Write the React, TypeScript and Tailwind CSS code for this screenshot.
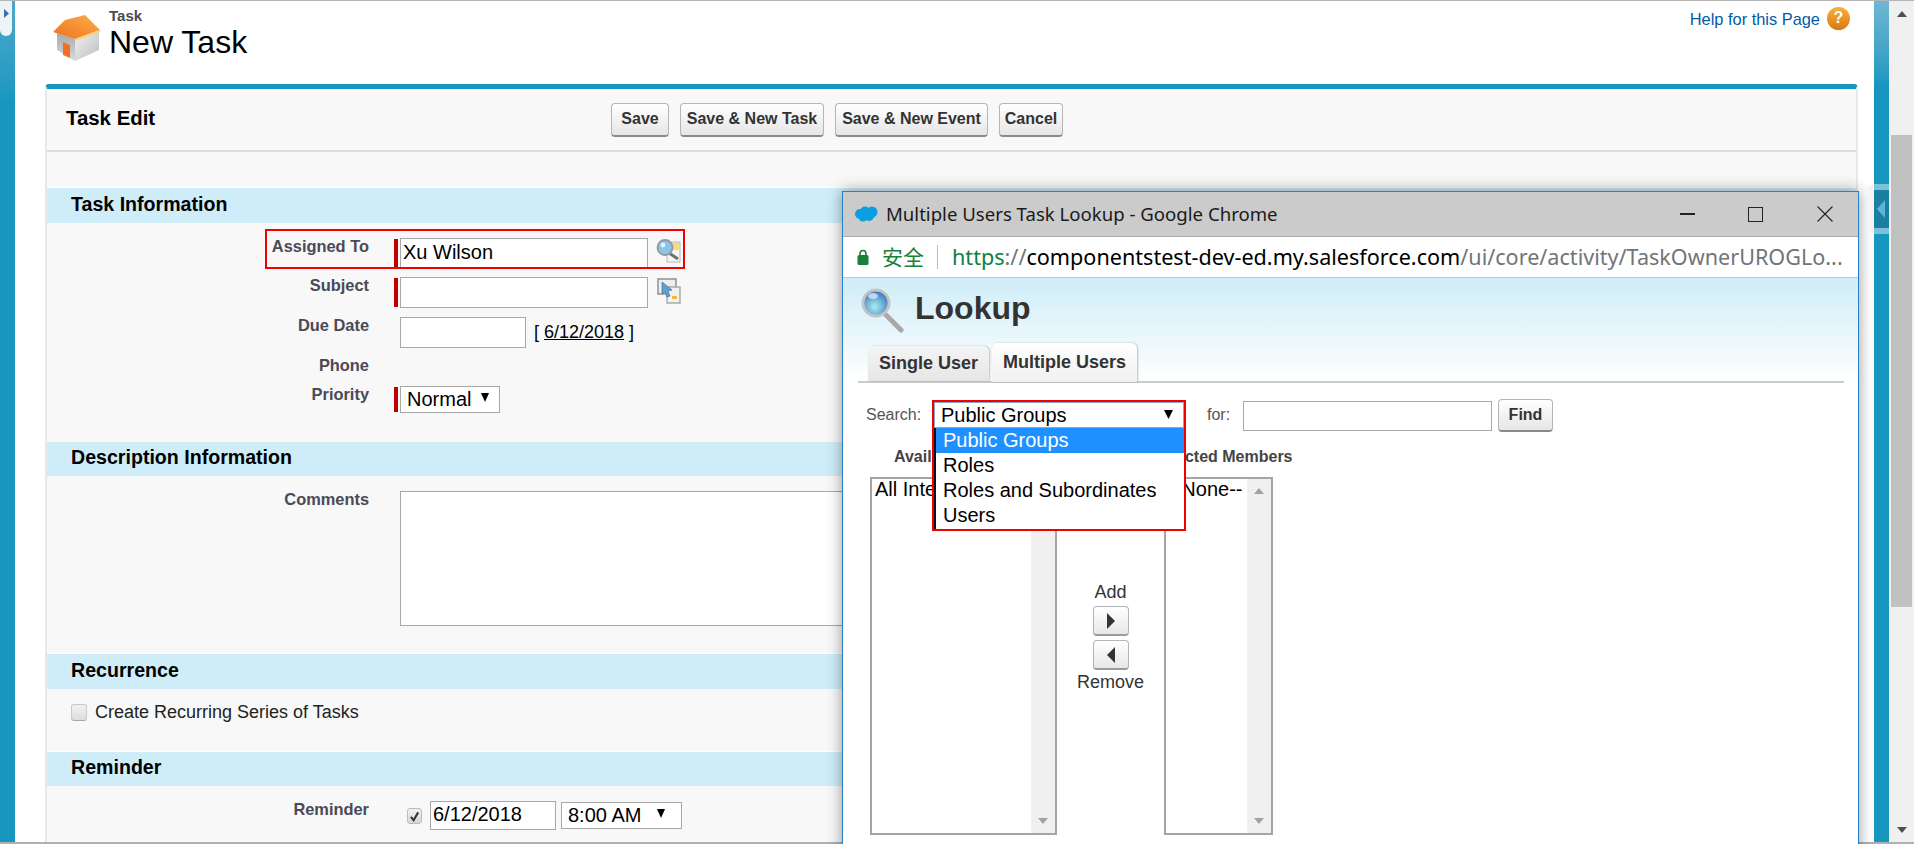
import React from 'react';
import clsx from 'clsx';

const Arrow = ({ dir, className }: { dir: 'up' | 'down' | 'left' | 'right'; className?: string }) => {
  const points = {
    up: '5,0 10,7 0,7',
    down: '0,0 10,0 5,7',
    left: '7,0 7,10 0,5',
    right: '0,0 7,5 0,10',
  }[dir];
  const box = dir === 'up' || dir === 'down' ? '0 0 10 7' : '0 0 7 10';
  return (
    <svg viewBox={box} preserveAspectRatio="none" className={className} fill="currentColor">
      <polygon points={points} />
    </svg>
  );
};

const HouseIcon = () => (
  <svg viewBox="0 0 47 47" className="w-[47px] h-[47px] shrink-0">
    <defs>
      <linearGradient id="wallR" x1="0" y1="0" x2="1" y2="1">
        <stop offset="0" stopColor="#f2f2f2" />
        <stop offset="1" stopColor="#bdbdbd" />
      </linearGradient>
      <linearGradient id="wallL" x1="0" y1="0" x2="0" y2="1">
        <stop offset="0" stopColor="#a8a8a8" />
        <stop offset="1" stopColor="#dadada" />
      </linearGradient>
      <linearGradient id="roof" x1="0" y1="1" x2="1" y2="0">
        <stop offset="0" stopColor="#f0701f" />
        <stop offset="1" stopColor="#fbb04a" />
      </linearGradient>
    </defs>
    <polygon points="4,19 22,25 22,47 4,36" fill="url(#wallL)" />
    <polygon points="22,25 46,17 46,36 22,47" fill="url(#wallR)" />
    <polygon points="10,28 17,31 17,44 10,41" fill="#f0702a" />
    <polygon points="0,18 12,6 32,1 47,16 22,25" fill="url(#roof)" />
    <polygon points="47,16 22,25 22,27 47,18" fill="#f9d27d" />
  </svg>
);

const LookupIcon = () => (
  <svg viewBox="0 0 25 24" className="w-[25px] h-[24px] ml-[8px] mt-[1px] shrink-0">
    <rect x="11" y="3" width="13" height="20" fill="#f6f6f0" stroke="#b5b5b5" />
    <rect x="12" y="4" width="11" height="7" fill="#fbd878" />
    <line x1="13" y1="14" x2="22" y2="20" stroke="#6f6f6f" strokeWidth="3" />
    <circle cx="9" cy="8.5" r="7.5" fill="#8cc4e8" stroke="#8f9aa3" strokeWidth="1.8" />
    <circle cx="7" cy="6" r="2.4" fill="#dff1fb" />
  </svg>
);

const MultiIcon = () => (
  <svg viewBox="0 0 24 26" className="w-[24px] h-[26px] ml-[9px] mt-[1px] shrink-0">
    <rect x="1" y="1" width="18" height="15" fill="#eeeeee" stroke="#8a8a8a" strokeWidth="1.4" />
    <rect x="10" y="9" width="13" height="16" fill="#f1f1ee" stroke="#a5a5a5" strokeWidth="1.4" />
    <rect x="15" y="18" width="5" height="3" fill="#f4b63f" />
    <polygon points="5,4 15,12 11,13 13,18 10,19 8,14 5,16" fill="#5da2d6" stroke="#35658c" strokeWidth="0.6" />
  </svg>
);

const BigLens = () => (
  <svg viewBox="0 0 44 46" className="w-[44px] h-[46px] shrink-0">
    <defs>
      <radialGradient id="lens" cx="0.45" cy="0.65" r="0.7">
        <stop offset="0" stopColor="#a8eef0" />
        <stop offset="1" stopColor="#2f68b8" />
      </radialGradient>
    </defs>
    <line x1="25" y1="28" x2="40" y2="43" stroke="#a9a9a9" strokeWidth="5" strokeLinecap="round" />
    <circle cx="15" cy="16" r="13" fill="url(#lens)" stroke="#c4c4c4" strokeWidth="3" />
    <ellipse cx="12" cy="9" rx="5" ry="3" fill="#d6e6f6" opacity="0.8" />
  </svg>
);

const Field = ({ className, value }: { className?: string; value?: string }) => (
  <input
    readOnly
    defaultValue={value}
    className={clsx('block border border-[#a8a8a8] bg-white px-[2px] pb-[2px] text-[20px] leading-none outline-none', className)}
  />
);

const Row = ({
  label,
  required,
  className,
  children,
}: {
  label: string;
  required?: boolean;
  className?: string;
  children?: React.ReactNode;
}) => (
  <div className={clsx('flex', className)}>
    <div className="w-[322px] text-right text-[16.4px] leading-[17px] font-bold text-[#4a4a56]">{label}</div>
    <div className="w-[31px] pl-[25px] py-[1px]">{required && <div className="w-[4px] h-full bg-[#c00000]" />}</div>
    <div className="flex items-start">{children}</div>
  </div>
);

const SectionHead = ({ title, className }: { title: string; className?: string }) => (
  <div className={clsx('bg-[#cfedf8] pl-[24px] pb-[2px] flex items-center text-[19.6px] font-bold text-black', className)}>{title}</div>
);

const PageButton = ({ label, className }: { label: string; className?: string }) => (
  <button
    className={clsx(
      'h-[34px] rounded-[4px] border border-[#b5b5b5] border-b-2 border-b-[#8a8a8a] bg-linear-to-b from-white to-[#e6e6e6] text-[16px] font-bold text-[#333]',
      className
    )}
  >
    {label}
  </button>
);

const ClosedSelect = ({ value, className }: { value: string; className?: string }) => (
  <div className={clsx('flex items-center border border-[#a8a8a8] bg-white text-[20px] pl-[6px] pb-[2px]', className)}>
    <span className="flex-1">{value}</span>
    <Arrow dir="down" className="w-[8px] h-[9px] mb-[3px] text-black" />
  </div>
);

const ListBox = ({ text, className, textClass }: { text: string; className?: string; textClass?: string }) => (
  <div className={clsx('h-[358px] border-2 border-[#a5a5a5] flex bg-white shrink-0', className)}>
    <div className={clsx('flex-1 text-[20px] leading-[20px] whitespace-nowrap overflow-hidden', textClass)}>{text}</div>
    <div className="w-[24px] bg-[#f0f0f0] flex flex-col justify-between items-center py-[9px] text-[#a3a3a3]">
      <Arrow dir="up" className="w-[10px] h-[6px]" />
      <Arrow dir="down" className="w-[10px] h-[6px]" />
    </div>
  </div>
);

const MoveButton = ({ dir }: { dir: 'left' | 'right' }) => (
  <button className="w-[36px] h-[30px] mt-[4px] rounded-[4px] border border-[#b5b5b5] border-b-2 border-b-[#9a9a9a] bg-linear-to-b from-white to-[#e8e8e8] flex items-center justify-center text-[#333]">
    <Arrow dir={dir} className="w-[8px] h-[16px]" />
  </button>
);

function LookupWindow() {
  return (
    <div className="absolute left-[842px] top-[191px] w-[1017px] h-[700px] z-10 border border-[#2a7fc9] bg-white shadow-[0_0_14px_rgba(0,0,0,0.4)] font-['Liberation_Sans',sans-serif]">
      <div className="h-[45px] bg-[#cbcbcb] border-b border-[#a9a9a9] flex items-center pl-[11px] pr-[25px]">
        <svg viewBox="0 0 24 16" className="w-[24px] h-[16px] shrink-0" fill="#0a9fe0">
          <circle cx="6" cy="8" r="5" />
          <circle cx="11" cy="5.5" r="5" />
          <circle cx="18" cy="6" r="5.5" />
          <circle cx="15" cy="10" r="5" />
          <circle cx="9" cy="11" r="4.5" />
        </svg>
        <span className="ml-[8px] text-[18.6px] text-[#1a1a1a] font-['Noto_Sans',sans-serif] whitespace-nowrap">Multiple Users Task Lookup - Google Chrome</span>
        <div className="ml-auto flex items-center text-[#222]">
          <div className="w-[15px] h-[1.5px] bg-[#222]" />
          <div className="w-[15px] h-[15px] border border-[#222] ml-[53px]" />
          <svg viewBox="0 0 16 16" className="w-[16px] h-[16px] ml-[54px]" stroke="#222" strokeWidth="1.1">
            <line x1="0.5" y1="0.5" x2="15.5" y2="15.5" />
            <line x1="15.5" y1="0.5" x2="0.5" y2="15.5" />
          </svg>
        </div>
      </div>
      <div className="h-[41px] border-b border-[#b8cbd5] flex items-center pl-[14px] whitespace-nowrap overflow-hidden">
        <svg viewBox="0 0 12 16" className="w-[12px] h-[16px] shrink-0">
          <path d="M3 7V4.5a3 3 0 0 1 6 0V7" fill="none" stroke="#188038" strokeWidth="1.6" />
          <rect x="0.5" y="6" width="11" height="10" rx="1.5" fill="#188038" />
        </svg>
        <span className="ml-[13px] text-[21px] text-[#188038] font-['Noto_Sans_CJK_SC',sans-serif]">安全</span>
        <div className="ml-[13px] w-px h-[24px] bg-[#bbb]" />
        <span className="ml-[14px] text-[21.6px] font-['Noto_Sans',sans-serif] text-[#70757a]">
          <span className="text-[#0b8043]">https</span>
          ://
          <span className="text-black">componentstest-dev-ed.my.salesforce.com</span>
          /ui/core/activity/TaskOwnerUROGLo...
        </span>
      </div>

      <div className="h-[105px] bg-linear-to-b from-[#cfedf8] to-white flex flex-col justify-between">
        <div className="flex items-start pl-[18px] pt-[9px]">
          <BigLens />
          <span className="ml-[10px] text-[32px] leading-[42px] font-bold text-[#333]">Lookup</span>
        </div>
        <div className="ml-[15px] mr-[14px] border-b-2 border-[#cccccc] pl-[10px] flex items-end gap-[3px] h-[39px]">
          <div className="w-[121px] h-[35px] rounded-t-[6px] bg-linear-to-b from-[#f4f4f4] to-[#e6e6e6] shadow-[1px_0_2px_rgba(0,0,0,0.25)] flex items-center justify-center text-[18px] font-bold text-[#333]">Single User</div>
          <div className="w-[145px] h-[39px] -mb-[1px] rounded-t-[6px] bg-linear-to-b from-white to-[#f0f0f0] shadow-[1px_0_2px_rgba(0,0,0,0.25)] flex items-center justify-center text-[18px] font-bold text-[#333]">Multiple Users</div>
        </div>
      </div>

      <div className="mt-[18px] flex items-start h-[30px] pl-[23px]">
        <span className="w-[66px] leading-[28px] text-[16px] text-[#555]">Search:</span>
        <div className="relative w-[254px] h-[30px]">
          <div className="absolute left-0 -top-[1px] w-[254px] h-[131px] border-2 border-[#f00000] bg-white z-10 text-[20px]">
            <div className="h-[26px] border border-[#8fa3cc] flex items-center pl-[6px] pr-[10px] pb-[1px]">
              <span className="flex-1">Public Groups</span>
              <Arrow dir="down" className="w-[9px] h-[9px] text-black" />
            </div>
            <div className="border-l-[2px] border-[#111] leading-[25px] pl-[7px] h-[101px]">
              <div className="-ml-[7px] pl-[7px] bg-[#1e90ff] text-white">Public Groups</div>
              <div>Roles</div>
              <div>Roles and Subordinates</div>
              <div>Users</div>
            </div>
          </div>
        </div>
        <span className="ml-[21px] w-[36px] leading-[28px] text-[16px] text-[#555]">for:</span>
        <Field className="w-[249px] h-[30px]" />
        <button className="ml-[6px] w-[55px] h-[33px] -mt-[2px] rounded-[4px] border border-[#b5b5b5] border-b-2 border-b-[#8a8a8a] bg-linear-to-b from-white to-[#e6e6e6] text-[16px] font-bold text-[#333]">Find</button>
      </div>

      <div className="mt-[16px] h-[20px] pl-[51px] flex text-[16px] leading-[20px] font-bold text-[#444] whitespace-nowrap">
        <span className="w-[145px]">Available Members</span>
        <span className="ml-[113px]">Selected Members</span>
      </div>

      <div className="mt-[10px] pl-[27px] flex items-start">
        <ListBox text="All Internal Users" className="w-[187px]" textClass="pl-[3px]" />
        <div className="w-[107px] flex flex-col items-center pt-[105px] text-[18px] leading-[20px] text-[#333]">
          <span>Add</span>
          <MoveButton dir="right" />
          <MoveButton dir="left" />
          <span className="mt-[2px]">Remove</span>
        </div>
        <ListBox text="--None--" className="w-[109px]" textClass="pl-[2px]" />
      </div>
    </div>
  );
}

export default function App() {
  return (
    <div className="relative w-[1914px] h-[844px] overflow-hidden bg-white text-black font-['Liberation_Sans',sans-serif]">
      <div className="flex h-[844px] border-t border-b-2 border-t-[#b5b5b5] border-b-[#b0b0b0]">
        <div className="w-[15px] shrink-0 bg-linear-to-b from-[#4ba9ca] to-[#1797c0] to-[12%] relative">
          <div className="w-[12px] h-[35px] rounded-b-[6px] bg-[#eef3f6] pt-[8px] pl-[4px] text-[#3a6fb5]">
            <Arrow dir="right" className="w-[5px] h-[9px]" />
          </div>
        </div>

        <div className="flex-1 min-w-0 flex flex-col">
          <div className="h-[83px] shrink-0 flex items-start pl-[38px] pr-[24px]">
            <div className="mt-[13px]">
              <HouseIcon />
            </div>
            <div className="ml-[9px] pt-[6px]">
              <div className="text-[15px] leading-[17px] font-bold text-[#4a4a56]">Task</div>
              <div className="text-[32px] leading-[36px]">New Task</div>
            </div>
            <div className="ml-auto mt-[6px] flex items-center text-[16.4px] text-[#015ba7]">
              <span>Help for this Page</span>
              <div className="ml-[7px] -mt-[2px] w-[23px] h-[23px] rounded-full bg-linear-to-b from-[#f7b13a] to-[#d9780f] flex items-center justify-center text-white font-bold text-[16px]">?</div>
            </div>
          </div>

          <div className="ml-[30px] mr-[16px] flex-1 min-h-0 rounded-t-[4px] border-t-[5px] border-t-[#1797c0] border-x-2 border-x-[#e8e8e8] bg-[#f8f8f8] flex flex-col">
            <div className="h-[63px] shrink-0 border-b-2 border-[#dcdcdc] flex items-center">
              <div className="w-[564px] pl-[19px] pb-[2px] text-[20.4px] font-bold">Task Edit</div>
              <div className="flex gap-[11px]">
                <PageButton label="Save" className="w-[58px]" />
                <PageButton label="Save & New Task" className="w-[144px]" />
                <PageButton label="Save & New Event" className="w-[153px]" />
                <PageButton label="Cancel" className="w-[64px]" />
              </div>
            </div>
            <div className="h-[35px] shrink-0" />

            <SectionHead title="Task Information" className="h-[36px] border-t border-white shrink-0" />
            <div className="h-[219px] shrink-0">
              <Row label="Assigned To" required className="relative mt-[15px] h-[30px]">
                <Field value="Xu Wilson" className="w-[248px] h-[30px]" />
                <LookupIcon />
                <div className="absolute left-[218px] -top-[9px] w-[420px] h-[40px] border-2 border-[#f00000]" />
              </Row>
              <Row label="Subject" required className="mt-[9px] h-[31px]">
                <Field className="w-[248px] h-[31px]" />
                <MultiIcon />
              </Row>
              <Row label="Due Date" className="mt-[9px] h-[31px]">
                <Field className="w-[126px] h-[31px]" />
                <span className="ml-[8px] mt-[5px] text-[18px] leading-[20px] whitespace-nowrap">
                  [ <span className="underline">6/12/2018</span> ]
                </span>
              </Row>
              <Row label="Phone" className="mt-[9px] h-[20px]" />
              <Row label="Priority" required className="mt-[9px] h-[27px]">
                <ClosedSelect value="Normal" className="w-[100px] h-[27px] pr-[10px]" />
              </Row>
            </div>

            <SectionHead title="Description Information" className="h-[34px] shrink-0" />
            <div className="h-[177px] shrink-0 pt-[15px]">
              <Row label="Comments">
                <textarea readOnly className="block w-[800px] h-[135px] border border-[#a8a8a8] bg-white outline-none resize-none" />
              </Row>
            </div>

            <SectionHead title="Recurrence" className="h-[36px] border-t border-white shrink-0" />
            <div className="h-[62px] shrink-0 pt-[15px] pl-[24px] flex items-start">
              <div className="w-[16px] h-[17px] rounded-[3px] border border-[#c8c8c8] border-b-[#aaa] bg-linear-to-b from-[#f2f2f2] to-[#dddddd]" />
              <span className="ml-[8px] text-[18px] leading-[17px] text-[#222]">Create Recurring Series of Tasks</span>
            </div>

            <SectionHead title="Reminder" className="h-[35px] border-t border-white shrink-0" />
            <div className="flex-1 pt-[15px]">
              <Row label="Reminder">
                <div className="ml-[7px] mt-[7px] w-[15px] h-[16px] rounded-[3px] border border-[#bbb] bg-linear-to-b from-[#f0f0f0] to-[#d8d8d8] flex items-center justify-center">
                  <svg viewBox="0 0 12 12" className="w-[11px] h-[11px]" fill="none" stroke="#333" strokeWidth="2.2">
                    <path d="M2 6.5 5 10 10 1.5" />
                  </svg>
                </div>
                <Field value="6/12/2018" className="ml-[8px] w-[126px] h-[29px]" />
                <ClosedSelect value="8:00 AM" className="ml-[5px] mt-[1px] w-[121px] h-[27px] pr-[16px]" />
              </Row>
            </div>
          </div>
        </div>

        <div className="w-[15px] shrink-0 relative z-20 bg-linear-to-b from-[#6db8d3] to-[#1797c0] to-[10%]" />
        <div className="w-[25px] shrink-0 relative z-20 bg-[#f0f0f0] flex flex-col items-center pt-[10px] text-[#505050]">
          <Arrow dir="up" className="w-[10px] h-[6px]" />
          <div className="mt-[118px] w-[21px] h-[472px] bg-[#c1c1c1]" />
          <Arrow dir="down" className="w-[10px] h-[6px] mt-[220px]" />
        </div>
      </div>

      <LookupWindow />

      <div className="absolute left-[1867px] top-[184px] w-[22px] h-[50px] z-20 rounded-l-[8px] bg-[#f4f4f4] flex items-center justify-end overflow-hidden">
        <div className="w-[15px] h-[50px] bg-[#7cc0da] flex items-center">
          <div className="w-[15px] h-[38px] bg-[#1a7fa3] flex items-center pl-[3px] text-[#5fb4d6]">
            <Arrow dir="left" className="w-[8px] h-[18px]" />
          </div>
        </div>
      </div>
    </div>
  );
}
